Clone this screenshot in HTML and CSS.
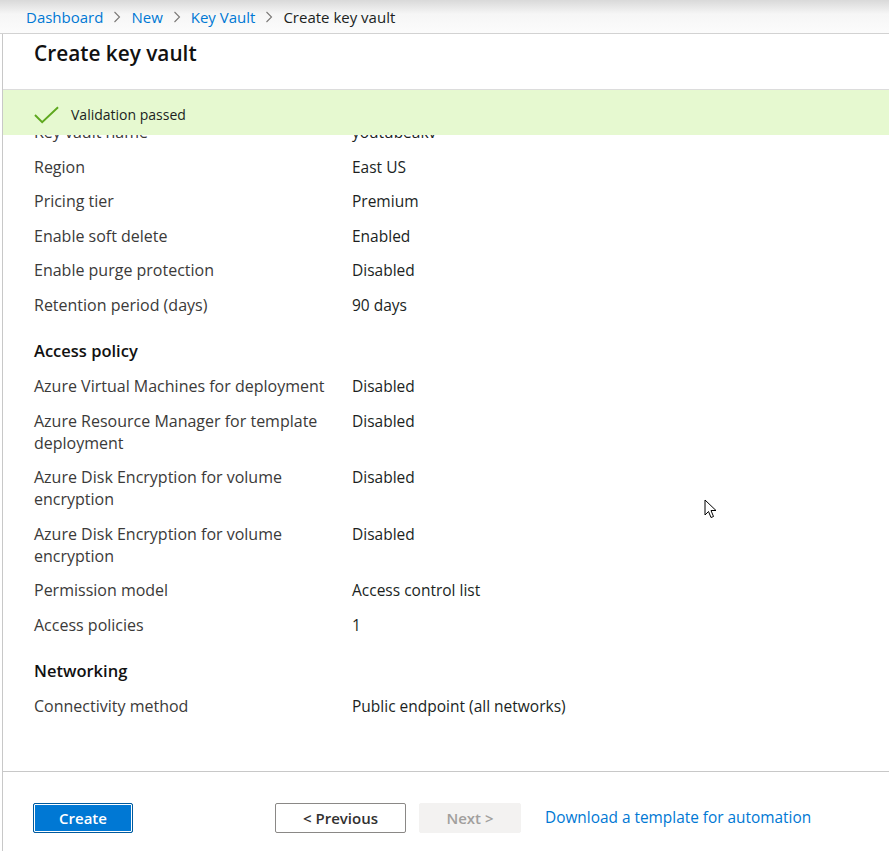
FILE: index.html
```html
<!DOCTYPE html>
<html lang="en">
<head>
    <meta charset="UTF-8">
    <meta name="viewport" content="width=device-width, initial-scale=1.0">
    <title>Create key vault</title>
    <link rel="stylesheet" href="styles.css">
</head>
<body>
    <nav class="breadcrumb">
        <a href="#">Dashboard</a>
        <svg class="chevron" viewBox="0 0 8 12"><polyline points="1.5,1 6.5,6 1.5,11"/></svg>
        <a href="#">New</a>
        <svg class="chevron" viewBox="0 0 8 12"><polyline points="1.5,1 6.5,6 1.5,11"/></svg>
        <a href="#">Key Vault</a>
        <svg class="chevron" viewBox="0 0 8 12"><polyline points="1.5,1 6.5,6 1.5,11"/></svg>
        <span class="current">Create key vault</span>
    </nav>

    <div class="blade">
        <header class="blade-header">
            <h1>Create key vault</h1>
        </header>

        <div class="banner">
            <svg class="check" viewBox="0 0 26 18"><polyline points="1,9 8.5,16.5 25,1"/></svg>
            <span>Validation passed</span>
        </div>

        <div class="content">
            <div class="summary">
                <div class="row"><div class="label">Key vault name</div><div class="value">youtubeakv</div></div>
                <div class="row"><div class="label">Region</div><div class="value">East US</div></div>
                <div class="row"><div class="label">Pricing tier</div><div class="value">Premium</div></div>
                <div class="row"><div class="label">Enable soft delete</div><div class="value">Enabled</div></div>
                <div class="row"><div class="label">Enable purge protection</div><div class="value">Disabled</div></div>
                <div class="row"><div class="label">Retention period (days)</div><div class="value">90 days</div></div>

                <h2>Access policy</h2>
                <div class="row"><div class="label">Azure Virtual Machines for deployment</div><div class="value">Disabled</div></div>
                <div class="row"><div class="label">Azure Resource Manager for template deployment</div><div class="value">Disabled</div></div>
                <div class="row"><div class="label">Azure Disk Encryption for volume encryption</div><div class="value">Disabled</div></div>
                <div class="row"><div class="label">Azure Disk Encryption for volume encryption</div><div class="value">Disabled</div></div>
                <div class="row"><div class="label">Permission model</div><div class="value">Access control list</div></div>
                <div class="row"><div class="label">Access policies</div><div class="value">1</div></div>

                <h2>Networking</h2>
                <div class="row"><div class="label">Connectivity method</div><div class="value">Public endpoint (all networks)</div></div>
            </div>
        </div>

        <footer class="blade-footer">
            <button class="btn btn-primary">Create</button>
            <button class="btn btn-default btn-prev">&lt; Previous</button>
            <button class="btn btn-disabled">Next &gt;</button>
            <a class="footer-link" href="#">Download a template for automation</a>
        </footer>
    </div>

    <svg class="cursor" viewBox="0 0 13 20"><path d="M1,1 L1,16 L4.5,12.5 L7,18.5 L9.5,17.5 L7,11.5 L12,11.5 Z"/></svg>
</body>
</html>
```

FILE: styles.css
```css
/* General */
html, body {
    margin: 0;
    padding: 0;
    height: 100%;
}

body {
    font-family: 'Open Sans', 'Noto Sans', sans-serif;
    font-size: 14px;
    color: #323130;
    background-color: #ffffff;
    display: flex;
    flex-direction: column;
    overflow: hidden;
}

a {
    color: #0078d4;
    text-decoration: none;
}

/* Breadcrumb */
.breadcrumb {
    height: 34px;
    flex-shrink: 0;
    box-sizing: border-box;
    padding: 1px 0 0 26px;
    display: flex;
    align-items: center;
    gap: 10px;
    font-size: 15px;
    background: linear-gradient(to bottom, #d9d9d9 0px, #f6f6f6 14px, #fcfcfc 34px);
    border-bottom: 1px solid #d2d2d2;
}

.breadcrumb .current {
    color: #201f1e;
}

.chevron {
    width: 8px;
    height: 12px;
    fill: none;
    stroke: #7a7876;
    stroke-width: 1.1;
}

/* Blade */
.blade {
    flex: 1;
    display: flex;
    flex-direction: column;
    margin-left: 2px;
    border-left: 1px solid #c8c8c8;
    min-height: 0;
}

.blade-header {
    height: 56px;
    box-sizing: border-box;
    padding: 4px 31px 0;
    border-bottom: 1px solid #dcdcdc;
}

h1 {
    margin: 0;
    font-size: 20.8px;
    line-height: 30px;
    font-weight: 600;
    color: #111111;
}

.banner {
    height: 45px;
    flex-shrink: 0;
    box-sizing: border-box;
    padding: 4px 0 0 31px;
    display: flex;
    align-items: center;
    background-color: #e6f9d0;
    font-size: 14px;
    color: #201f1e;
}

.check {
    width: 25px;
    height: 18px;
    margin-right: 12px;
    fill: none;
    stroke: #5ea81e;
    stroke-width: 2;
}

/* Summary */
.content {
    flex: 1;
    overflow: hidden;
    min-height: 0;
}

.summary {
    margin-top: -14px;
    padding: 0 31px;
    display: flex;
    flex-direction: column;
    gap: 12.5px;
}

.row {
    display: grid;
    grid-template-columns: 318px 1fr;
    line-height: 22px;
}

.label {
    padding-right: 14px;
    font-size: 16px;
    color: #3b3a39;
}

.value {
    font-size: 15.5px;
    color: #201f1e;
}

h2 {
    margin: 10.5px 0 0;
    font-size: 16.5px;
    line-height: 24px;
    font-weight: 600;
    color: #111111;
}

/* Footer */
.blade-footer {
    height: 80px;
    flex-shrink: 0;
    box-sizing: border-box;
    border-top: 1px solid #c8c8c8;
    padding: 31px 0 0 30px;
    display: flex;
    align-items: flex-start;
}

.btn {
    height: 30px;
    box-sizing: border-box;
    font-family: inherit;
    font-size: 15px;
    font-weight: 600;
    border-radius: 2px;
    padding: 0;
    cursor: pointer;
}

.btn-primary {
    width: 100px;
    background-color: #0078d4;
    color: #ffffff;
    border: 1px solid #005a9e;
    box-shadow: inset 0 0 0 1px #ffffff;
}

.btn-default {
    width: 131px;
    background-color: #ffffff;
    color: #323130;
    border: 1px solid #8a8886;
}

.btn-prev {
    margin-left: 142px;
}

.btn-disabled {
    width: 102px;
    margin-left: 13px;
    background-color: #f3f2f1;
    color: #a19f9d;
    border: 1px solid #f3f2f1;
}

.footer-link {
    margin-left: 24px;
    line-height: 30px;
    font-size: 15.4px;
}

.cursor {
    position: absolute;
    left: 704px;
    top: 499px;
    width: 13px;
    height: 20px;
    fill: #ffffff;
    stroke: #000000;
    stroke-width: 1;
}
```
